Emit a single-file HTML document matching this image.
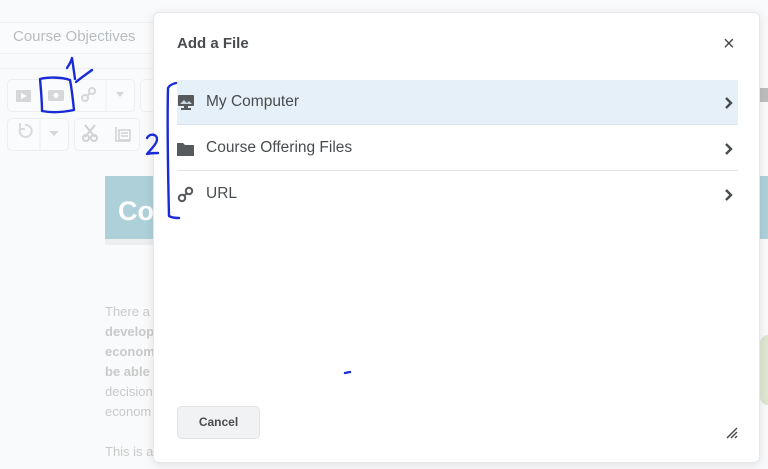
<!DOCTYPE html>
<html><head><meta charset="utf-8"><style>
*{margin:0;padding:0;box-sizing:border-box}
body{width:768px;height:469px;overflow:hidden;background:#f9fafb;font-family:"Liberation Sans",sans-serif;position:relative}
.abs{position:absolute}
.tb{position:absolute;border:1px solid #eceef0;border-radius:5px;background:#fafbfc}
.dlg{position:absolute;left:153px;top:12px;width:607px;height:451px;background:#fff;border:1px solid #e6e8eb;border-radius:6px;box-shadow:0 2px 10px rgba(0,0,0,.10)}
.row{position:absolute;left:23px;width:561px;height:45px;font-size:15.5px;color:#494c4e}
.row span{position:absolute;left:29px;top:13px}
.chev{position:absolute;right:4px;top:16px}
.txt{position:absolute;left:105px;font-size:13px;color:#c9c9c9;line-height:20px}
</style></head><body>
<div class="abs" style="left:0;top:22px;width:155px;height:32px;border-top:1px solid #eef0f2;border-bottom:1px solid #eef0f2;background:#fafbfc"></div>
<div class="abs" style="left:13px;top:28px;font-size:15px;color:#b9bcbf">Course Objectives</div>
<div class="abs" style="left:0;top:68px;width:155px;border-top:1px solid #eef0f2"></div>
<div class="tb" style="left:7px;top:79px;width:128px;height:33px"></div>
<div class="tb" style="left:7px;top:118px;width:62px;height:33px"></div>
<div class="tb" style="left:74px;top:118px;width:66px;height:33px"></div>
<div class="tb" style="left:140px;top:79px;width:20px;height:33px"></div>
<svg class="abs" style="left:0;top:70px" width="160" height="90">
<rect x="16" y="20" width="15" height="12" rx="1" fill="#d5d7d9"/><path d="M21 23l6 3-6 3z" fill="#fff"/>
<rect x="48" y="20" width="16" height="11" rx="2" fill="#d5d7d9"/><circle cx="56" cy="25.5" r="2.5" fill="#fff"/>
<circle cx="85" cy="28" r="3" fill="none" stroke="#d5d7d9" stroke-width="2"/><circle cx="92" cy="21" r="3" fill="none" stroke="#d5d7d9" stroke-width="2"/><path d="M87 26l3-3" stroke="#d5d7d9" stroke-width="2"/>
<path d="M116 22l4 5 4-5z" fill="#d5d7d9"/><line x1="106" y1="10" x2="106" y2="42" stroke="#eceef0"/>
<path d="M20 59a6 6 0 105-4" stroke="#d8dadc" stroke-width="2" fill="none"/><path d="M20 53v6h5" stroke="#d8dadc" stroke-width="2" fill="none"/>
<line x1="40" y1="48" x2="40" y2="80" stroke="#eceef0"/><path d="M49 61l5 5 5-5z" fill="#d5d7d9"/>
<path d="M85 55l10 12M95 55l-10 12" stroke="#d0d2d4" stroke-width="2"/><circle cx="86" cy="68" r="3" fill="none" stroke="#d0d2d4" stroke-width="2"/><circle cx="94" cy="68" r="3" fill="none" stroke="#d0d2d4" stroke-width="2"/>
<path d="M116 57v14h14M119 60h11v10h-11zM121 63h7M121 66h7" stroke="#d0d2d4" stroke-width="1.5" fill="none"/>
</svg>
<div class="abs" style="left:105px;top:176px;width:60px;height:63px;background:#aed0d9"></div>
<div class="abs" style="left:105px;top:239px;width:60px;height:6px;background:#eceef0"></div>
<div class="abs" style="left:118px;top:196px;font-size:27px;font-weight:bold;color:#fff">Co</div>
<div class="txt" style="top:302px">There a<br><b>develop</b><br><b>econom</b><br><b>be able</b><br>decision<br>econom</div>
<div class="txt" style="top:442px">This is a</div>
<div class="abs" style="left:760px;top:88px;width:8px;height:14px;background:#bdbdbd"></div>
<div class="abs" style="left:760px;top:176px;width:8px;height:63px;background:#aed0d9"></div>
<div class="abs" style="left:760px;top:335px;width:8px;height:70px;background:#dfe6d2;border-radius:8px 0 0 8px"></div>
<div class="dlg">
<div class="abs" style="left:23px;top:22px;font-size:15px;font-weight:bold;color:#494c4e">Add a File</div>
<div class="abs" style="left:569px;top:20px;font-size:20px;color:#494c4e">×</div>
<div class="row" style="top:67px;background:#e5f0f9;border-bottom:1px solid #dde3ea">
<svg class="abs" style="left:0;top:14px" width="18" height="17"><rect x="1" y="1" width="16" height="11" rx="1" fill="#565a5c"/><path d="M3 10l4-4 3 3 2-2 3 3z" fill="#c9d5df"/><rect x="7" y="12" width="4" height="3" fill="#565a5c"/><rect x="4" y="14" width="10" height="2" fill="#565a5c"/></svg>
<span>My Computer</span><svg class="chev" width="10" height="14"><path d="M2 2l5 5-5 5" stroke="#494c4e" stroke-width="2.4" fill="none"/></svg></div>
<div class="row" style="top:113px;border-bottom:1px solid #e3e5e8">
<svg class="abs" style="left:0;top:16px" width="17" height="14"><path d="M0 1h6l2 2h9v11H0z" fill="#565a5c"/></svg>
<span>Course Offering Files</span><svg class="chev" width="10" height="14"><path d="M2 2l5 5-5 5" stroke="#494c4e" stroke-width="2.4" fill="none"/></svg></div>
<div class="row" style="top:159px">
<svg class="abs" style="left:0;top:14px" width="17" height="17"><circle cx="5" cy="12" r="3.2" fill="none" stroke="#565a5c" stroke-width="2"/><circle cx="12" cy="5" r="3.2" fill="none" stroke="#565a5c" stroke-width="2"/><path d="M7 10l3-3" stroke="#565a5c" stroke-width="2"/></svg>
<span>URL</span><svg class="chev" width="10" height="14"><path d="M2 2l5 5-5 5" stroke="#494c4e" stroke-width="2.4" fill="none"/></svg></div>
<div class="abs" style="left:23px;top:393px;width:83px;height:33px;background:#f1f2f4;border:1px solid #e0e2e5;border-radius:5px;font-size:12px;font-weight:bold;color:#494c4e;text-align:center;line-height:31px">Cancel</div>
<svg class="abs" style="left:571px;top:413px" width="14" height="14"><path d="M2 12L12 2M6 12l6-6M10 12l2-2" stroke="#494c4e" stroke-width="1.5"/></svg>
</div>
<svg class="abs" style="left:0;top:0" width="768" height="469">
<g stroke="#1a2bd6" stroke-width="2.4" fill="none" stroke-linecap="round" stroke-linejoin="round">
<path d="M40 79c8-2 22-2 30 1 2 10 3 21 4 30-10 2-22 3-32 1 0-10-1-21-2-32z"/>
<path d="M67 68c2-3 4-6 5-10 1 7 2 14 3 21M76 82c6-5 12-9 16-12"/>
<path d="M147 138c3-5 10-4 10 1 0 5-6 10-10 15 4-1 8-1 11-1"/>
<path d="M176 83c-4 1-7 3-8 5-1 40 0 85 1 128 3 2 7 2 10 2"/>
<path d="M345 373l5-1"/>
</g></svg>
</body></html>
